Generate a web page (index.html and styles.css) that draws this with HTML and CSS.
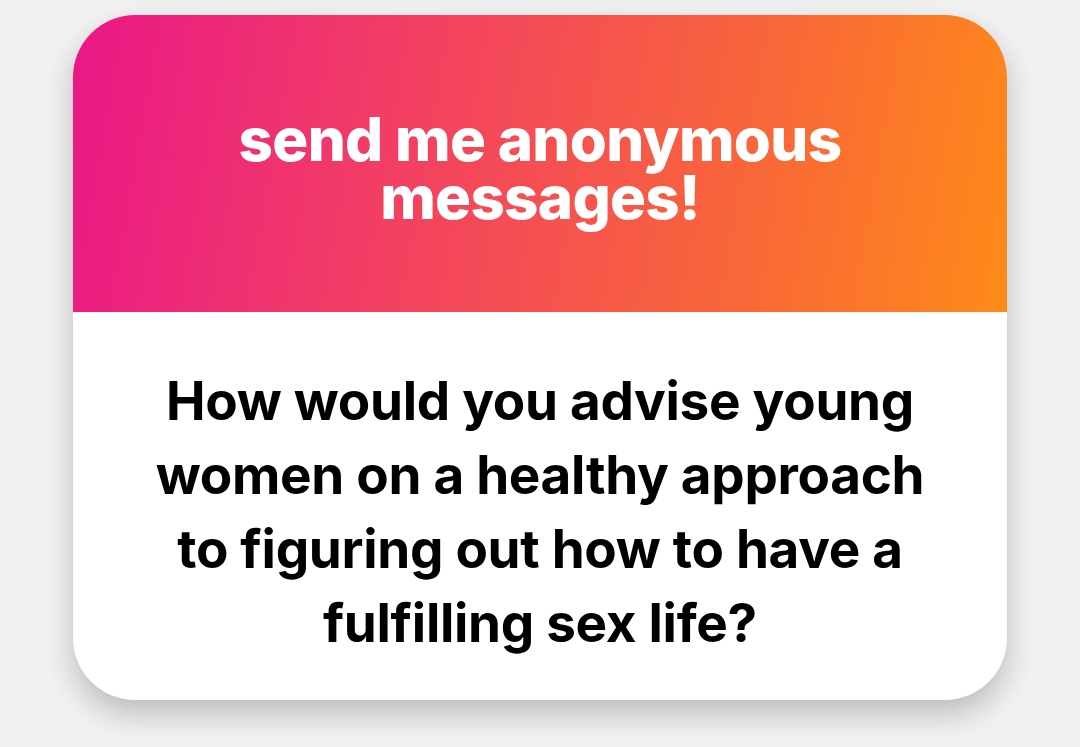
FILE: index.html
```html
<!DOCTYPE html>
<html>
<head>
<meta charset="utf-8">
<link rel="stylesheet" href="styles.css">
</head>
<body>
<div class="page">
  <div class="card">
    <div class="card-head">
      <h1 class="title">send me anonymous<br>messages!</h1>
    </div>
    <div class="card-body">
      <p class="question">How would you advise young women on a healthy approach to figuring out how to have a fulfilling sex life?</p>
    </div>
  </div>
</div>
</body>
</html>
```
FILE: styles.css
```css
html, body {
  margin: 0;
  padding: 0;
  background: #f1f1f1;
  height: 100%;
}
.page {
  width: 1080px;
  height: 747px;
  padding: 15px 0 0 73px;
  box-sizing: border-box;
  overflow: hidden;
}
.card {
  width: 934px;
  height: 685px;
  border-radius: 62px;
  overflow: hidden;
  background: #fff;
  box-shadow: 0 14px 30px rgba(0,0,0,0.22);
  display: flex;
  flex-direction: column;
}
.card-head {
  height: 297px;
  background: linear-gradient(100deg, #ea1787 0%, #f0346e 25%, #f54f52 50%, #f96a35 75%, #fe8b19 100%);
  display: flex;
  align-items: center;
  justify-content: center;
}
.title {
  margin: 0;
  color: #fff;
  font-family: Inter, "Noto Sans", sans-serif;
  font-weight: 800;
  font-size: 60px;
  line-height: 58px;
  letter-spacing: -0.7px;
  text-align: center;
  padding-top: 8px;
}
.card-body {
  flex: 1;
  display: flex;
  align-items: center;
  justify-content: center;
}
.question {
  margin: 0;
  width: 820px;
  color: #000;
  font-family: Inter, "Noto Sans", sans-serif;
  font-weight: 700;
  font-size: 53px;
  line-height: 74px;
  letter-spacing: -0.3px;
  text-align: center;
  padding-top: 12px;
}
```
